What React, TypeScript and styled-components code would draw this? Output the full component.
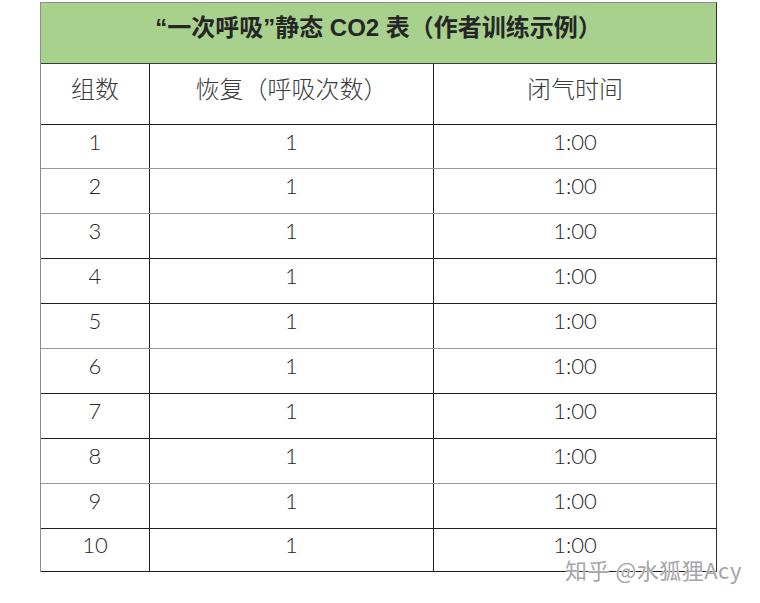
import React from "react"
import styled, { createGlobalStyle } from "styled-components"

const GlobalStyle = createGlobalStyle`
  html, body {
    margin: 0;
    padding: 0;
    background: #ffffff;
  }
  body {
    width: 760px;
    height: 603px;
    overflow: hidden;
    font-family: Lato, "Noto Sans CJK SC", sans-serif;
  }
`

const Page = styled.div`
  position: relative;
  width: 760px;
  height: 603px;
  padding: 2px 0 0 40px;
  box-sizing: border-box;
`

const Table = styled.div`
  width: 677px;
  box-sizing: border-box;
  border-top: 1px solid #8c8c8c;
  border-left: 1px solid #8c8c8c;
  border-right: 1px solid #2e2e2e;
`

const TitleRow = styled.div`
  height: 61px;
  box-sizing: border-box;
  background: #a9d18e;
  border-bottom: 1px solid #3c3c3c;
  display: flex;
  align-items: center;
  justify-content: center;
  padding-bottom: 16px;
  font-family: "Liberation Sans", "Noto Sans CJK SC", sans-serif;
  font-weight: 700;
  font-size: 24px;
  color: #262626;
`

const Row = styled.div<{ $h: number; $line: string }>`
  display: grid;
  grid-template-columns: 108px 284px 283px;
  height: ${(p) => p.$h}px;
  box-sizing: border-box;
  border-bottom: 1px solid ${(p) => p.$line};
`

const Cell = styled.div<{ $head?: boolean }>`
  display: flex;
  align-items: center;
  justify-content: center;
  box-sizing: border-box;
  padding-bottom: ${(p) => (p.$head ? 14 : 11)}px;
  font-family: ${(p) =>
    p.$head ? `"Noto Sans CJK SC", sans-serif` : `Lato, "Noto Sans CJK SC", sans-serif`};
  font-weight: 300;
  font-size: ${(p) => (p.$head ? 24 : 22)}px;
  color: ${(p) => (p.$head ? "#3c3c3c" : "#262626")};
  & + & {
    border-left: 1px solid #1e1e1e;
  }
`

const Watermark = styled.div`
  position: absolute;
  left: 565px;
  top: 553px;
  font-family: "Noto Sans CJK SC", sans-serif;
  font-size: 22px;
  letter-spacing: 0.5px;
  color: #a6a6a6;
  text-shadow: 0 0 1px #ffffff, 0 0 2px #ffffff;
  white-space: nowrap;
`

const DARK = "#1e1e1e"
const GRAY = "#9a9a9a"

const rows = [
  { n: 1, h: 44, line: GRAY },
  { n: 2, h: 45, line: GRAY },
  { n: 3, h: 45, line: DARK },
  { n: 4, h: 45, line: DARK },
  { n: 5, h: 45, line: GRAY },
  { n: 6, h: 45, line: DARK },
  { n: 7, h: 45, line: DARK },
  { n: 8, h: 45, line: GRAY },
  { n: 9, h: 45, line: DARK },
  { n: 10, h: 43, line: DARK },
]

const App = () => {
  return (
    <Page>
      <GlobalStyle />
      <Table>
        <TitleRow>“一次呼吸”静态 CO2 表（作者训练示例）</TitleRow>
        <Row $h={61} $line={DARK}>
          <Cell $head>组数</Cell>
          <Cell $head>恢复（呼吸次数）</Cell>
          <Cell $head>闭气时间</Cell>
        </Row>
        {rows.map((r) => (
          <Row key={r.n} $h={r.h} $line={r.line}>
            <Cell>{r.n}</Cell>
            <Cell>1</Cell>
            <Cell>1:00</Cell>
          </Row>
        ))}
      </Table>
      <Watermark>知乎 @水狐狸Acy</Watermark>
    </Page>
  )
}

export default App
